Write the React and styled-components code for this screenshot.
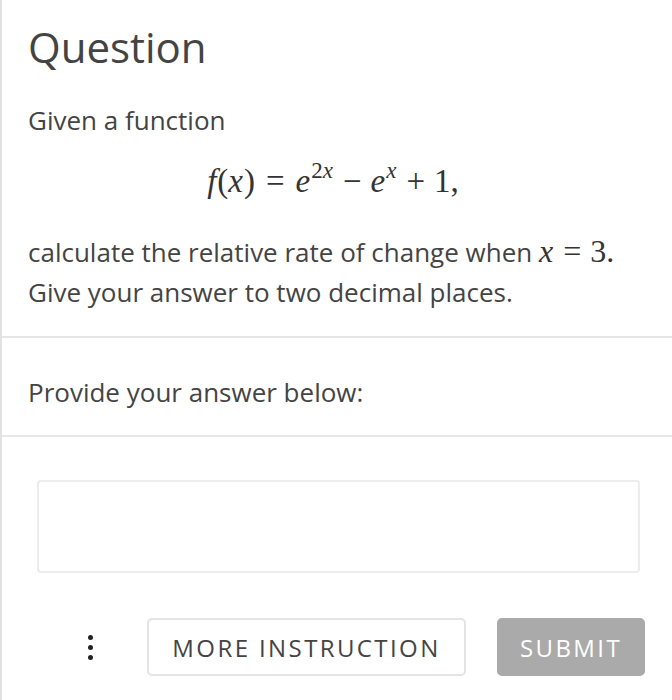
import styled, { createGlobalStyle } from "styled-components"

const Global = createGlobalStyle`
    html, body {
        margin: 0;
        padding: 0;
        background: #ffffff;
    }
    body {
        font-family: "Open Sans", "Noto Sans", sans-serif;
        color: #444444;
    }
`

const Page = styled.main`
    min-height: 700px;
    border-left: 2px solid #e2e2e2;
    box-sizing: border-box;
`

const Section = styled.section`
    padding: ${({ pad }) => pad};
    border-bottom: ${({ divider }) => divider ? "2px solid #e6e6e6" : "none"};
`

const Heading = styled.h1`
    margin: 0 0 29px;
    font-size: 42px;
    font-weight: 400;
    line-height: 48px;
    color: #444444;
`

const Text = styled.p`
    margin: 0;
    font-size: 26px;
    line-height: 40px;
    color: #444444;
`

const MathBlock = styled.div`
    margin: 21px 0 30px;
    text-align: center;
    font-family: "Liberation Serif", "Times New Roman", serif;
    font-size: 33px;
    line-height: 40px;
    color: #333333;
    padding-right: 8px;
`

const MathInline = styled.span`
    font-family: "Liberation Serif", "Times New Roman", serif;
    font-size: 32px;
    color: #333333;
`

const Var = styled.i`
    font-style: italic;
    margin-right: 1px;
`

const Op = styled.span`
    margin: 0 ${({ space }) => space || "11px"};
`

const Sup = styled.sup`
    font-size: 23px;
    line-height: 0;
    position: relative;
    top: -2px;
    vertical-align: super;
`

const AnswerArea = styled.section`
    padding: 43px 27px 0 35px;
    display: flex;
    flex-direction: column;
`

const Input = styled.div`
    height: 93px;
    width: 603px;
    box-sizing: border-box;
    border: 2px solid #ececec;
    border-radius: 4px;
`

const ButtonRow = styled.div`
    margin-top: 45px;
    display: flex;
    align-items: center;
    justify-content: flex-end;
    gap: 31px;
`

const Dots = styled.div`
    display: flex;
    flex-direction: column;
    gap: 5px;
    margin-right: 23px;

    span {
        width: 5px;
        height: 5px;
        border-radius: 50%;
        background: #222222;
    }
`

const Button = styled.button`
    height: 58px;
    box-sizing: border-box;
    padding: 0;
    font-family: "Open Sans", "Noto Sans", sans-serif;
    font-size: 24px;
    letter-spacing: 2.4px;
    border-radius: 5px;
    border: 2px solid ${({ primary }) => primary ? "#aaaaaa" : "#e4e4e4"};
    background: ${({ primary }) => primary ? "#aaaaaa" : "#ffffff"};
    color: ${({ primary }) => primary ? "#ffffff" : "#444444"};
    width: ${({ w }) => w};
`

export default function App() {
    return <>
        <Global />
        <Page>
            <Section divider pad="23px 26px 24px">
                <Heading>Question</Heading>
                <Text>Given a function</Text>
                <MathBlock>
                    <Var>f</Var>(<Var>x</Var>)<Op>=</Op><Var>e</Var><Sup>2<Var>x</Var></Sup>
                    <Op space="9px">−</Op><Var>e</Var><Sup><Var>x</Var></Sup><Op space="9px">+</Op>1,
                </MathBlock>
                <Text>
                    calculate the relative rate of change when <MathInline><Var>x</Var><Op space="9px">=</Op>3.</MathInline>
                </Text>
                <Text>Give your answer to two decimal places.</Text>
            </Section>
            <Section divider pad="34px 26px 23px">
                <Text>Provide your answer below:</Text>
            </Section>
            <AnswerArea>
                <Input />
                <ButtonRow>
                    <Dots><span /><span /><span /></Dots>
                    <Button w="319px">MORE INSTRUCTION</Button>
                    <Button primary w="148px">SUBMIT</Button>
                </ButtonRow>
            </AnswerArea>
        </Page>
    </>
}
